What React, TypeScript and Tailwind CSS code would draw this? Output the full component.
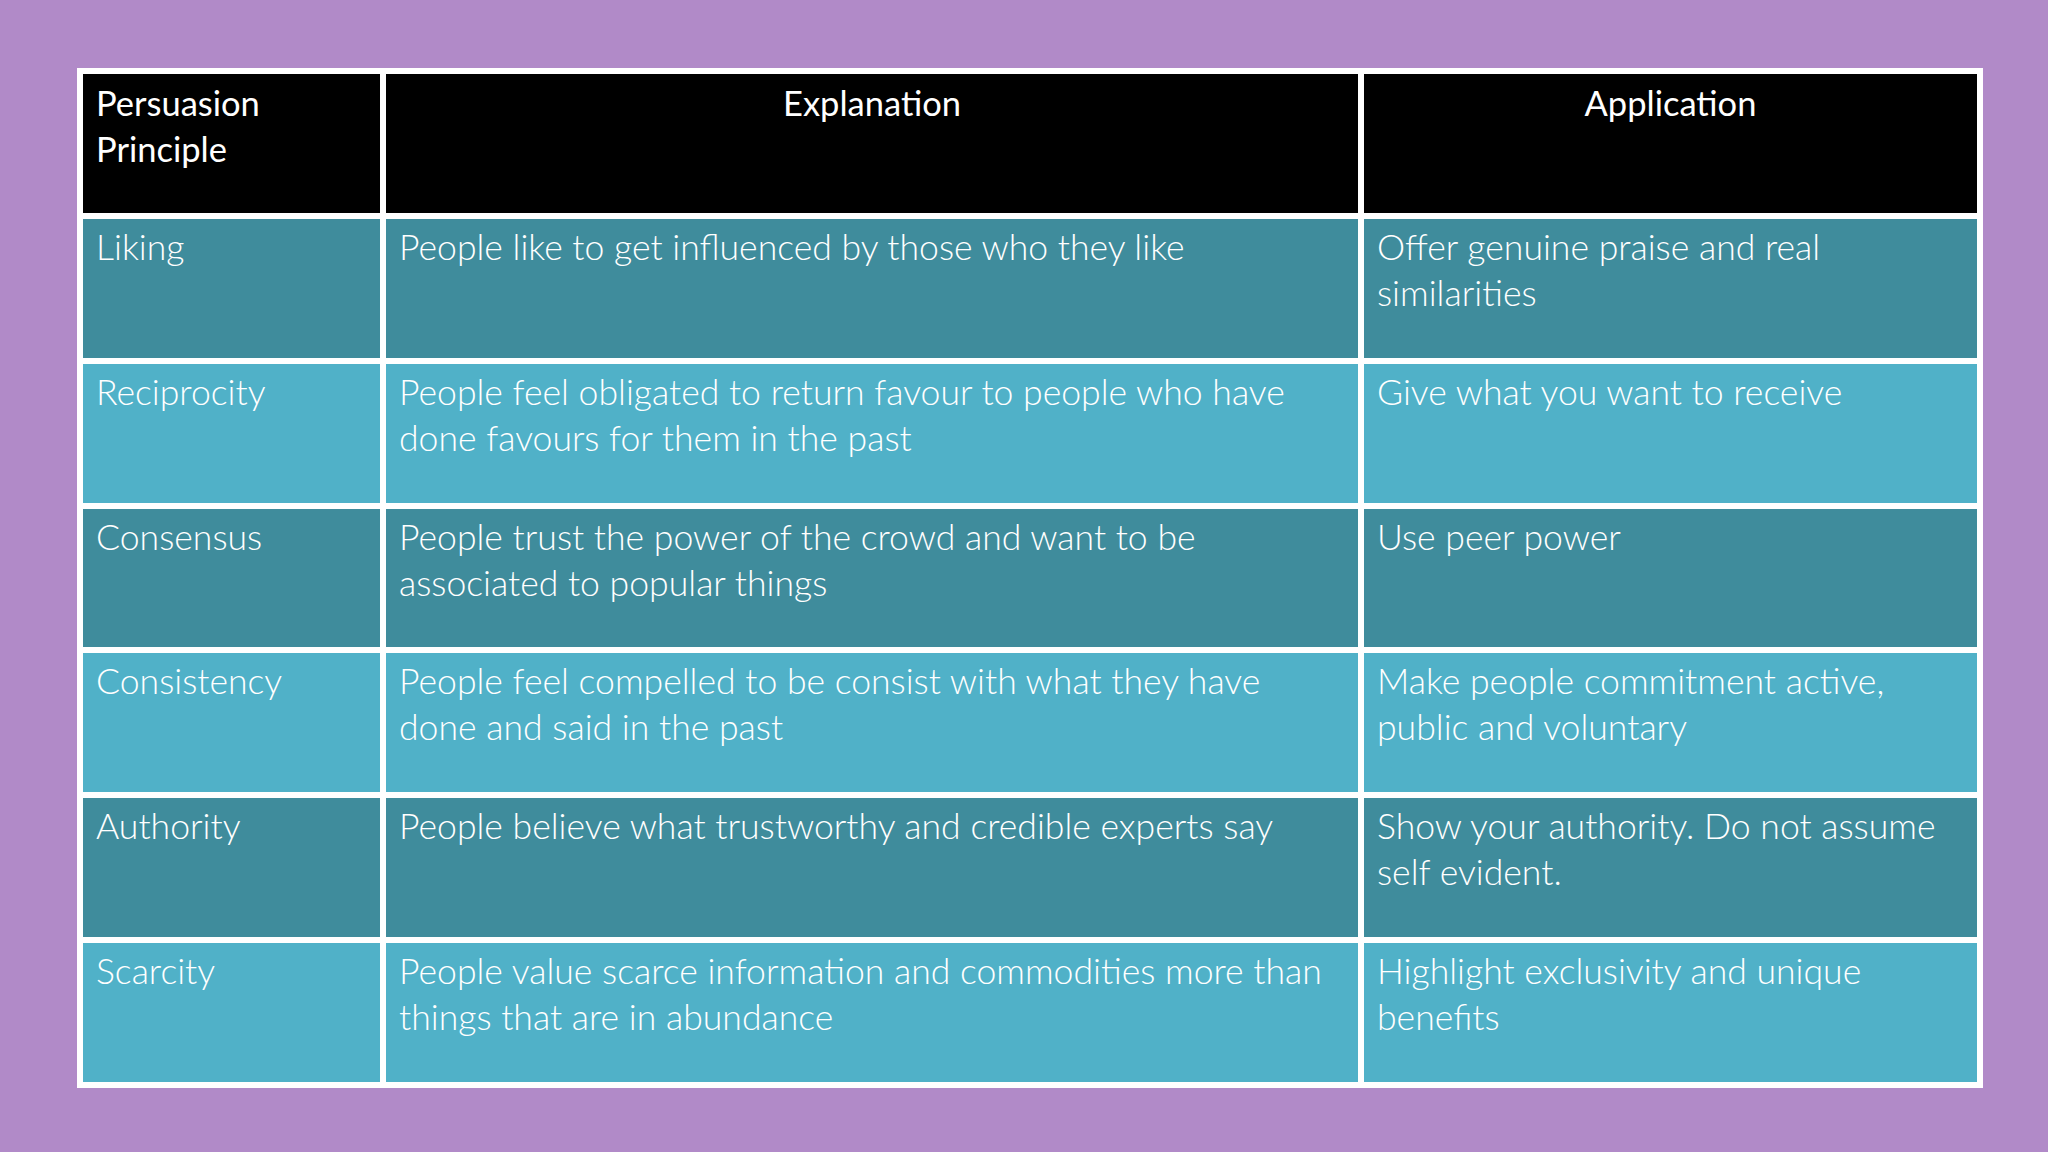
import React from 'react';

const rows = [
  {
    principle: 'Liking',
    explanation: 'People like to get influenced by those who they like',
    application: 'Offer genuine praise and real similarities',
  },
  {
    principle: 'Reciprocity',
    explanation: 'People feel obligated to return favour to people who have done favours for them in the past',
    application: 'Give what you want to receive',
  },
  {
    principle: 'Consensus',
    explanation: 'People trust the power of the crowd and want to be associated to popular things',
    application: 'Use peer power',
  },
  {
    principle: 'Consistency',
    explanation: 'People feel compelled to be consist with what they have done and said in the past',
    application: 'Make people commitment active, public and voluntary',
  },
  {
    principle: 'Authority',
    explanation: 'People believe what trustworthy and credible experts say',
    application: 'Show your authority. Do not assume self evident.',
  },
  {
    principle: 'Scarcity',
    explanation: 'People value scarce information and commodities more than things that are in abundance',
    application: 'Highlight exclusivity and unique benefits',
  },
];

const App = () => {
  return (
    <div className="w-[2048px] h-[1152px] bg-[#b18ac8] pt-[68px] pl-[77px] font-['Lato',sans-serif] text-white">
      <div className="grid w-[1906px] h-[1020px] grid-cols-[297px_972px_613px] grid-rows-[repeat(7,1fr)] gap-[6px] p-[6px] bg-white">
        <div className="bg-black px-[13px] pt-[6px] text-[34.5px] leading-[46px]">
          Persuasion Principle
        </div>
        <div className="bg-black px-[13px] pt-[6px] text-[34.5px] leading-[46px] text-center">
          Explanation
        </div>
        <div className="bg-black px-[13px] pt-[6px] text-[34.5px] leading-[46px] text-center">
          Application
        </div>
        {rows.map((row, i) => {
          const bg = i % 2 === 0 ? 'bg-[#3f8c9c]' : 'bg-[#50b1c8]';
          return (
            <React.Fragment key={row.principle}>
              <div className={`${bg} px-[13px] pt-[5px] text-[35.6px] leading-[46px] font-light`}>
                {row.principle}
              </div>
              <div className={`${bg} px-[13px] pt-[5px] text-[35.6px] leading-[46px] font-light`}>
                {row.explanation}
              </div>
              <div className={`${bg} px-[13px] pt-[5px] text-[35.6px] leading-[46px] font-light`}>
                {row.application}
              </div>
            </React.Fragment>
          );
        })}
      </div>
    </div>
  );
};

export default App;
